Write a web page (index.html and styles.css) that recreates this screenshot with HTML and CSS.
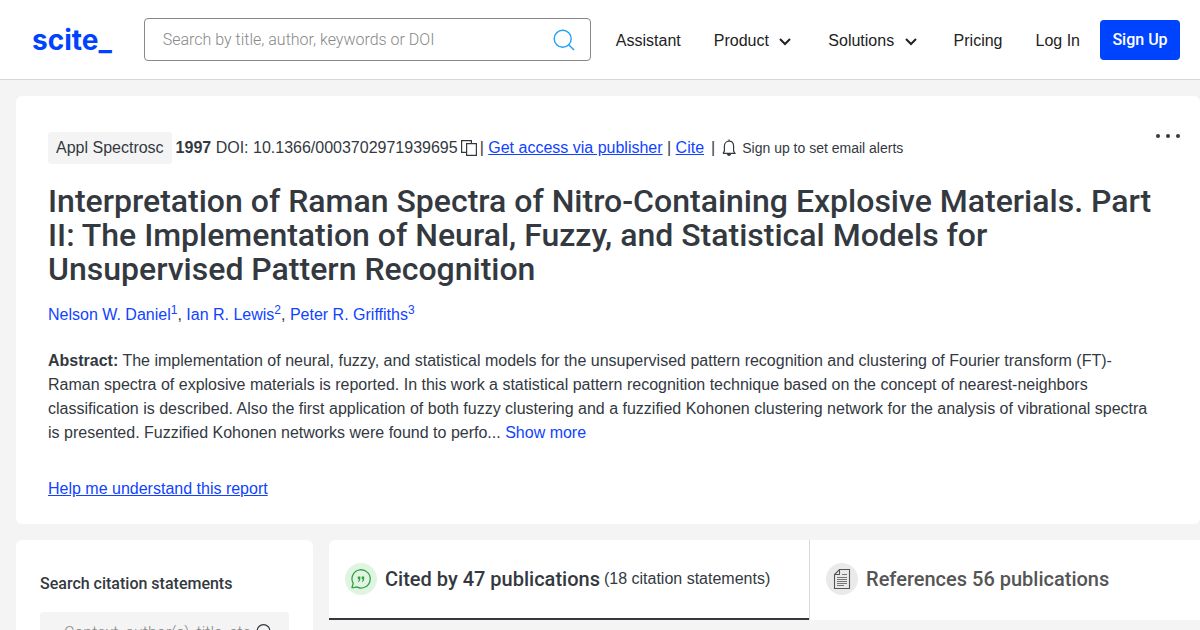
FILE: index.html
```
<!DOCTYPE html>
<html lang="en">
<head>
  <meta charset="UTF-8" />
  <meta name="viewport" content="width=device-width, initial-scale=1.0"/>
  <title>scite_</title>
  <link rel="stylesheet" href="styles.css">
</head>
<body>
  <header class="header">
    <a class="logo" href="#">scite_</a>
    <form class="search">
      <input type="text" class="search-input" placeholder="Search by title, author, keywords or DOI" aria-label="Search by title, author, keywords or DOI">
      <button type="button" class="search-button" aria-label="Search">
        <svg width="22" height="22" viewBox="0 0 22 22" fill="none" stroke="currentColor" stroke-width="1.4">
          <circle cx="9.7" cy="9.7" r="8.5"/>
          <path d="M15.7 15.7L21 21"/>
        </svg>
      </button>
    </form>
    <nav class="nav">
      <a href="#">Assistant</a>
      <a href="#">Product
        <svg class="chevron" width="12" height="8" viewBox="0 0 12 8" fill="none" stroke="currentColor" stroke-width="2"><path d="M1 1l5 5 5-5"/></svg>
      </a>
      <a href="#">Solutions
        <svg class="chevron" width="12" height="8" viewBox="0 0 12 8" fill="none" stroke="currentColor" stroke-width="2"><path d="M1 1l5 5 5-5"/></svg>
      </a>
      <a href="#">Pricing</a>
      <a href="#">Log In</a>
    </nav>
    <button type="button" class="signup">Sign Up</button>
  </header>

  <main class="page">
    <section class="card report">
      <div class="meta">
        <span class="journal">Appl Spectrosc</span>
        <span><b>1997</b> DOI: 10.1366/0003702971939695</span>
        <button type="button" class="icon-button copy" aria-label="Copy DOI">
          <svg width="18" height="18" viewBox="0 0 18 18" fill="none" stroke="currentColor" stroke-width="1.2">
            <path d="M6 13.4H1.600V1.600h9.800V4"/>
            <path d="M6.600 4.600h9.800v11.800H6.600z"/>
          </svg>
        </button>
        <span>| <a class="link" href="#">Get access via publisher</a> | <a class="link" href="#">Cite</a></span>
        <span class="divider">|</span>
        <button type="button" class="icon-button alerts">
          <svg width="14" height="18" viewBox="0 0 14 18" fill="none" stroke="currentColor" stroke-width="1.2">
            <path d="M7 .5v1.7M1 14.4h12L11.600 12V7.200C11.600 4.200 9.600 2.200 7 2.200S2.400 4.200 2.400 7.200V12L1 14.400"/>
            <path d="M5.400 14.600c0 2.400 3.200 2.400 3.200 0z" fill="currentColor"/>
          </svg>
          Sign up to set email alerts
        </button>
      </div>
      <button type="button" class="more" aria-label="More actions">
        <svg width="24" height="4" viewBox="0 0 24 4" fill="currentColor">
          <circle cx="2" cy="2" r="2"/><circle cx="12" cy="2" r="2"/><circle cx="22" cy="2" r="2"/>
        </svg>
      </button>

      <h1>Interpretation of Raman Spectra of Nitro-Containing Explosive Materials. Part II: The Implementation of Neural, Fuzzy, and Statistical Models for Unsupervised Pattern Recognition</h1>

      <p class="authors"><a href="#">Nelson W. Daniel<sup>1</sup></a>, <a href="#">Ian R. Lewis<sup>2</sup></a>, <a href="#">Peter R. Griffiths<sup>3</sup></a></p>

      <p class="abstract"><b>Abstract:</b> The implementation of neural, fuzzy, and statistical models for the unsupervised pattern recognition and clustering of Fourier transform (FT)-Raman spectra of explosive materials is reported. In this work a statistical pattern recognition technique based on the concept of nearest-neighbors classification is described. Also the first application of both fuzzy clustering and a fuzzified Kohonen clustering network for the analysis of vibrational spectra is presented. Fuzzified Kohonen networks were found to perfo... <a href="#">Show more</a></p>

      <a class="link help" href="#">Help me understand this report</a>
    </section>

    <div class="columns">
      <aside class="card sidebar">
        <label class="sidebar-title" for="citation-search">Search citation statements</label>
        <div class="filter">
          <input type="text" id="citation-search" class="filter-input" placeholder="Context, author(s), title, etc.">
          <svg width="16" height="16" viewBox="0 0 16 16" fill="none" stroke="currentColor" stroke-width="1.2">
            <circle cx="7.500" cy="7" r="6.400"/>
            <path d="M12 11.500L15.500 15"/>
          </svg>
        </div>
      </aside>

      <div class="tabs">
        <button type="button" class="tab active">
          <svg class="tab-icon" width="32" height="32" viewBox="0 0 32 32" fill="none">
            <circle cx="16" cy="16" r="16" fill="#dff5e1"/>
            <path d="M7 24.500L8.200 20.400A9.100 9.100 0 1 1 11.800 23.900C10.200 24.500 8.600 24.700 7 24.500z" stroke="#34a044" stroke-width="1.300" stroke-linejoin="round"/>
            <path d="M12.800 13.400h2.500v2.100c0 1.900-.7 3-2.100 3.500l-.3-.7c.7-.4 1-1.100 1.100-2h-1.200zM16.700 13.400h2.500v2.100c0 1.900-.7 3-2.100 3.500l-.3-.7c.7-.4 1-1.100 1.100-2h-1.200z" fill="#34a044"/>
          </svg>
          <span class="tab-title">Cited by 47 publications</span>
          <span>(18 citation statements)</span>
        </button>
        <button type="button" class="tab">
          <svg class="tab-icon" width="32" height="32" viewBox="0 0 32 32" fill="none">
            <circle cx="16" cy="16" r="16" fill="#eaeaea"/>
            <path d="M13.500 6.500h10v19h-15v-14zv5h-5" stroke="#555" stroke-width="1.100"/>
            <path d="M16 11.500h5M11 14.500h10M11 16.500h10M11 18.500h10M11 20.500h10M11 22.500h7" stroke="#777" stroke-width="1"/>
          </svg>
          <span class="tab-title">References 56 publications</span>
        </button>
      </div>
    </div>
  </main>
</body>
</html>
```
FILE: styles.css
```
* {
  box-sizing: border-box;
}
body {
  margin: 0;
  background-color: #f4f4f4;
  color: #33393f;
  font-family: "Liberation Sans", Arial, sans-serif;
  font-size: 16px;
  line-height: 24px;
}
a {
  color: #0f43ff;
  text-decoration: none;
}
button {
  border: 0;
  padding: 0;
  background: none;
  color: inherit;
  font: inherit;
  cursor: pointer;
}
svg {
  flex-shrink: 0;
}

/* header */
.header {
  display: flex;
  align-items: center;
  height: 80px;
  padding: 0 20px 0 32px;
  background-color: white;
  border-bottom: 1px solid #d8d8d8;
}
.logo {
  margin-right: 32px;
  color: #0043ff;
  font-family: Inter, sans-serif;
  font-size: 28px;
  font-weight: 700;
}
.search {
  display: flex;
  align-items: center;
  flex: 1;
  height: 43px;
  margin-right: 25px;
  padding-right: 15px;
  border: 1px solid #888;
  border-radius: 4px;
}
.search-input {
  flex: 1;
  min-width: 0;
  padding: 0 18px;
  border: 0;
  background: none;
  font-family: Roboto, sans-serif;
  font-size: 16px;
  font-weight: 300;
}
.search-input::placeholder,
.filter-input::placeholder {
  color: #888;
}
.search-button {
  display: flex;
  color: #1ea0f5;
}
.nav {
  display: flex;
  gap: 33px;
  padding-top: 2px;
}
.nav a {
  color: #222;
  white-space: nowrap;
}
.chevron {
  margin: 0 4px 0 6px;
}
.signup {
  width: 80px;
  height: 40px;
  margin-left: 20px;
  border-radius: 4px;
  background-color: #0043ff;
  color: white;
  font-family: Roboto, sans-serif;
  font-weight: 500;
}

/* report */
.page {
  padding: 16px 0 16px 16px;
}
.card {
  background-color: white;
  border-radius: 6px;
}
.report {
  position: relative;
  padding: 36px 44px 23px 32px;
}
.meta {
  display: flex;
  align-items: center;
  white-space: nowrap;
}
.journal {
  margin-right: 4px;
  padding: 4px 8px;
  border-radius: 4px;
  background-color: #f4f4f4;
}
.link {
  color: #0f43ff;
  text-decoration: underline;
}
.icon-button {
  display: flex;
  align-items: center;
}
.copy {
  margin: 0 2px;
}
.divider {
  margin: 0 7px;
}
.alerts {
  gap: 6px;
  font-size: 14px;
}
.more {
  display: flex;
  position: absolute;
  top: 38px;
  right: 20px;
}
h1 {
  margin: 20px 0 17px;
  font-family: Roboto, sans-serif;
  font-size: 32px;
  font-weight: 500;
  line-height: 34px;
}
.authors {
  margin: 0 0 22px;
}
.authors sup {
  font-size: 12px;
  line-height: 0;
}
.abstract {
  margin: 0 0 32px;
}
.help {
  display: block;
  width: fit-content;
}

/* citations */
.columns {
  display: grid;
  grid-template-columns: 297px 1fr;
  align-items: start;
  gap: 16px;
  margin-top: 16px;
}
.sidebar {
  padding: 32px 24px;
}
.sidebar-title {
  display: block;
  margin-bottom: 16px;
  font-family: Roboto, sans-serif;
  font-weight: 500;
}
.filter {
  display: flex;
  align-items: center;
  height: 40px;
  padding: 0 17px 0 24px;
  border-radius: 4px;
  background-color: #f4f4f4;
}
.filter-input {
  flex: 1;
  min-width: 0;
  padding: 0;
  border: 0;
  background: none;
  font-family: Roboto, sans-serif;
  font-size: 16px;
  font-weight: 300;
}
.tabs {
  display: flex;
  height: 80px;
  border-top-left-radius: 6px;
  background-color: white;
}
.tab {
  display: flex;
  align-items: center;
  flex: 1;
  padding: 0 16px 2px;
  color: #555;
  white-space: nowrap;
}
.active {
  flex: 0 0 calc(55% + 2px);
  border-right: 1px solid #d8d8d8;
  box-shadow: inset 0 -2px #33393f;
  color: #33393f;
}
.tab-icon {
  margin-right: 8px;
}
.tab-title {
  margin-right: 4px;
  font-family: Roboto, sans-serif;
  font-size: 20px;
  font-weight: 500;
}
```
